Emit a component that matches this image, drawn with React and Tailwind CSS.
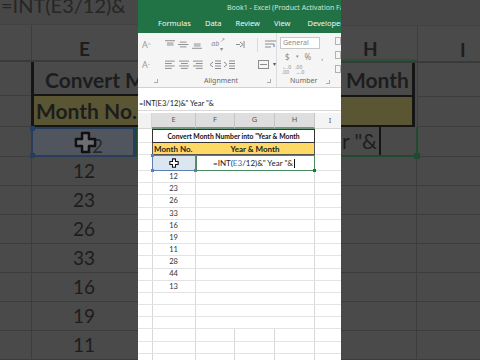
import React from "react";

const bgNums = ["12", "23", "26", "33", "16", "19", "11"];
const nums = ["12", "23", "26", "33", "16", "19", "11", "28", "44", "13", "", "", "", "", "", ""];

function Cross({ size, fill, stroke }) {
  return (
    <svg width={size} height={size} viewBox="0 0 12 12">
      <path
        d="M4.2 1h3.6v3.2H11v3.6H7.8V11H4.2V7.8H1V4.2h3.2z"
        fill={fill}
        stroke={stroke}
        strokeWidth="1.3"
        strokeLinejoin="round"
      />
    </svg>
  );
}

// tiny ribbon glyph made of strokes
function Glyph({ w = 11, h = 9, lines, color = "#8c8c8c" }) {
  return (
    <svg width={w} height={h} viewBox={`0 0 ${w} ${h}`}>
      {lines.map((l, i) => (
        <line key={i} x1={l[0]} y1={l[1]} x2={l[2]} y2={l[3]} stroke={l[4] || color} strokeWidth="1" />
      ))}
    </svg>
  );
}

const alTop = [[0, 0.5, 11, 0.5], [2, 3, 9, 3], [2, 5, 9, 5]];
const alMid = [[2, 2, 9, 2], [0, 4.5, 11, 4.5], [2, 7, 9, 7]];
const alBot = [[2, 4, 9, 4], [2, 6, 9, 6], [0, 8.5, 11, 8.5]];
const alLeft = [[0, 1, 10, 1], [0, 3.5, 7, 3.5], [0, 6, 10, 6], [0, 8.5, 7, 8.5]];
const alCenter = [[0, 1, 11, 1], [2, 3.5, 9, 3.5], [0, 6, 11, 6], [2, 8.5, 9, 8.5]];
const alRight = [[1, 1, 11, 1], [4, 3.5, 11, 3.5], [1, 6, 11, 6], [4, 8.5, 11, 8.5]];
const indL = [[0, 4.5, 3, 2], [0, 4.5, 3, 7], [5, 1, 11, 1], [5, 3.5, 11, 3.5], [5, 6, 11, 6], [5, 8.5, 11, 8.5]];
const indR = [[3, 4.5, 0, 2], [3, 4.5, 0, 7], [5, 1, 11, 1], [5, 3.5, 11, 3.5], [5, 6, 11, 6], [5, 8.5, 11, 8.5]];
const merge = [[0, 0.5, 11, 0.5], [0, 8.5, 11, 8.5], [0.5, 0, 0.5, 9], [10.5, 0, 10.5, 9], [2, 4.5, 9, 4.5]];
const wrap = [[0, 1, 11, 1], [0, 4, 9, 4], [9, 4, 9, 7, "#4a7bc0"], [0, 7, 6, 7]];

function LeftBg() {
  return (
    <div className="w-[138px] shrink-0 flex flex-col text-[#1d1d1d]">
      <div className="h-[26px] overflow-hidden bg-[#474747] border-b border-[#424242]">
        <div className="text-[20px] leading-[22px] -mt-[6px] pl-[1px] whitespace-nowrap text-[#262626]">
          {"=INT(E3/12)&"}
        </div>
      </div>
      <div className="h-[37px] flex border-b-2 border-[#3a3a3a]">
        <div className="w-[32px] border-r border-[#3d3d3d]" />
        <div className="flex-1 flex items-center justify-center pt-[14px] pr-[1px] text-[19px] font-bold">E</div>
      </div>
      <div className="h-[34px] flex">
        <div className="w-[31px] border-b border-[#3d3d3d]" />
        <div className="flex-1 border-l-[3px] border-b-2 border-[#151515] flex items-center pl-[11px] pt-[3px] text-[21px] font-bold whitespace-nowrap overflow-hidden">
          Convert Month
        </div>
      </div>
      <div className="h-[31px] flex">
        <div className="w-[31px] border-b border-[#3d3d3d]" />
        <div className="flex-1 bg-[#5a5634] border-l-[3px] border-b-2 border-[#151515] flex items-center pl-[2px] text-[21px] font-bold whitespace-nowrap overflow-hidden">
          Month No.
        </div>
      </div>
      <div className="h-[30px] flex">
        <div className="w-[31px] border-b border-[#3d3d3d]" />
        <div className="w-[104px] relative bg-[#51565e] border-2 border-[#263d5c] flex items-center justify-center text-[19px]">
          <span className="pl-[18px] pt-[8px] text-[#2a2a2a]">12</span>
          <div className="absolute left-[41px] top-[2px]">
            <Cross size={23} fill="#6d6f73" stroke="#111" />
          </div>
          <div className="absolute -left-[3px] -top-[3px] w-[5px] h-[5px] bg-[#263d5c]" />
          <div className="absolute -left-[3px] -bottom-[3px] w-[5px] h-[5px] bg-[#263d5c]" />
        </div>
        <div className="flex-1 border-l-2 border-[#1f4a30]" />
      </div>
      {bgNums.map((n, i) => (
        <div key={i} className="h-[29px] flex border-b border-[#3c3c3c] shrink-0">
          <div className="w-[32px] border-r border-[#3d3d3d]" />
          <div className="flex-1 flex items-center justify-center pr-[2px] text-[19px]">{n}</div>
        </div>
      ))}
    </div>
  );
}

function RightBg() {
  return (
    <div className="w-[139px] shrink-0 flex flex-col text-[#1d1d1d]">
      <div className="h-[26px] bg-[#474747] border-b border-[#424242]" />
      <div className="h-[37px] flex border-b-2 border-[#3a3a3a]">
        <div className="w-[76px] border-b-2 border-[#2a5238] flex items-center pl-[22px] pt-[14px] text-[19px] font-bold">
          H
        </div>
        <div className="flex-1 border-l border-[#3d3d3d] flex items-center pl-[42px] pt-[14px] text-[19px] font-bold">I</div>
      </div>
      <div className="h-[34px] flex">
        <div className="w-[74px] border-r-[3px] border-b-2 border-[#151515] flex items-center pl-[5px] pt-[3px] text-[21px] font-bold">
          Month
        </div>
        <div className="flex-1 ml-[2px] border-l border-b border-[#3d3d3d]" />
      </div>
      <div className="h-[31px] flex">
        <div className="w-[74px] bg-[#5a5634] border-r-[3px] border-b-2 border-[#151515]" />
        <div className="flex-1 ml-[2px] border-l border-b border-[#3d3d3d]" />
      </div>
      <div className="h-[30px] flex">
        <div className="w-[77px] relative border-r-2 border-b-2 border-[#1f4a30] flex items-center text-[21px]">
          <span className="pl-[1px] whitespace-nowrap">{'r "&'}</span>
          <div className="ml-[2px] w-[2px] h-[28px] bg-[#151515]" />
          <div className="absolute -right-[4px] -bottom-[4px] w-[6px] h-[6px] bg-[#1f4a30]" />
        </div>
        <div className="flex-1 border-b border-[#3d3d3d]" />
      </div>
      {bgNums.map((n, i) => (
        <div key={i} className="h-[29px] flex border-b border-[#3c3c3c] shrink-0">
          <div className="w-[76px] border-r border-[#3d3d3d]" />
        </div>
      ))}
    </div>
  );
}

function Ribbon() {
  return (
    <div className="h-[55px] bg-[#f5f5f5] border-b border-[#d2d2d2] flex text-[#7a7a7a] shrink-0">
      <div className="w-[22px] flex flex-col pl-[4px] pt-[7px]">
        <div className="text-[9px] leading-[10px] text-[#9a9a9a]">A<sup className="text-[5px]">^</sup></div>
        <div className="mt-[10px] text-[9px] leading-[10px] text-[#9a9a9a]">A<span className="text-[5px]">ˇ</span></div>
        <div className="mt-auto mb-[4px] ml-[12px] w-[4px] h-[4px] border-r border-b border-[#aaa]" />
      </div>
      <div className="w-[117px] border-r border-[#dcdcdc] flex flex-col">
        <div className="h-[21px] flex items-center gap-[3px] pl-[5px] pt-[2px]">
          <Glyph lines={alTop} />
          <Glyph lines={alMid} />
          <Glyph lines={alBot} />
          <div className="ml-[6px] flex items-center gap-[1px] text-[7px] text-[#8a8a8a] italic">
            ab<span className="not-italic text-[6px]">↗ ▾</span>
          </div>
          <div className="ml-[4px]">
            <Glyph w={10} lines={[[0, 4.5, 4, 4.5], [4, 2, 7, 4.5], [4, 7, 7, 4.5], [8, 1, 8, 8]]} />
          </div>
          <div className="ml-[8px] w-px h-[14px] bg-[#dadada]" />
          <div className="ml-[4px]">
            <Glyph lines={wrap} />
          </div>
        </div>
        <div className="h-[21px] flex items-center gap-[3px] pl-[5px]">
          <Glyph lines={alLeft} />
          <Glyph lines={alCenter} />
          <Glyph lines={alRight} />
          <div className="ml-[4px] flex gap-[3px]">
            <Glyph lines={indL} />
            <Glyph lines={indR} />
          </div>
          <div className="ml-[20px]">
            <Glyph w={12} lines={merge} />
          </div>
          <span className="text-[6px] text-[#555]">▾</span>
        </div>
        <div className="flex-1 flex items-center pl-[44px] text-[7px] text-[#6a6a6a]">
          Alignment
          <div className="ml-auto mr-[5px] w-[4px] h-[4px] border-r border-b border-[#aaa]" />
        </div>
      </div>
      <div className="w-[57px] flex flex-col">
        <div className="h-[16px] flex items-end pl-[3px]">
          <div className="w-[40px] h-[12px] bg-white border border-[#c8c8c8] flex items-center pl-[2px] text-[7px] text-[#8a8a8a]">
            General
          </div>
        </div>
        <div className="h-[15px] flex items-center pl-[8px] gap-[6px] text-[8px] text-[#8a8a8a]">
          <span>$</span>
          <span className="text-[5px]">▾</span>
          <span className="text-[8px]">%</span>
          <span className="ml-[4px] text-[8px]">,</span>
        </div>
        <div className="h-[12px] flex items-center pl-[5px] gap-[4px] text-[5px] leading-[5px] text-[#8a8a8a]">
          <span>←.0<br />.00</span>
          <span>.00<br />→.0</span>
        </div>
        <div className="flex-1 flex items-center pl-[13px] text-[7px] text-[#6a6a6a]">
          Number
          <div className="ml-auto mr-[4px] w-[4px] h-[4px] border-r border-b border-[#aaa]" />
        </div>
      </div>
      <div className="flex-1 flex flex-col gap-[6px] pt-[4px] pl-[1px]">
        <div className="w-[6px] h-[8px] border border-[#b0b0b0]" />
        <div className="w-[6px] h-[8px] border border-[#b0b0b0]" />
        <div className="w-[6px] h-[8px] border border-[#b0b0b0]" />
      </div>
    </div>
  );
}

function Panel() {
  return (
    <div className="w-[203px] shrink-0 flex flex-col bg-white font-['Noto_Sans',sans-serif] overflow-hidden">
      <div className="h-[33px] bg-[#217346] flex flex-col shrink-0">
        <div className="h-[17px] flex items-center pl-[89px] text-[7px] text-[#cfe3d5] whitespace-nowrap overflow-hidden">
          Book1 - Excel (Product Activation Failed)
        </div>
        <div className="flex-1 flex items-center gap-[14px] pl-[20px] pb-[2px] text-[7.5px] text-[#f2f7f3] whitespace-nowrap overflow-hidden">
          <span>Formulas</span>
          <span>Data</span>
          <span>Review</span>
          <span>View</span>
          <span className="ml-[3px]">Developer</span>
        </div>
      </div>
      <Ribbon />
      <div className="h-[10px] bg-white shrink-0" />
      <div className="h-[13px] flex items-center pl-[1px] border-b border-[#d8d8d8] text-[7.5px] text-[#222] font-['Lato',sans-serif] shrink-0">
        {'=INT(E3/12)&" Year "&'}
      </div>
      <div className="h-[2px] shrink-0" />
      <div className="h-[16px] flex text-[7.5px] text-[#555] shrink-0">
        <div className="w-[14px] bg-[#f2f2f2] border-r border-b border-[#d6d6d6]" />
        {[["E", 44], ["F", 39], ["G", 40], ["H", 40]].map(([c, w]) => (
          <div
            key={c}
            className="bg-[#dedede] border-r border-[#c6c6c6] border-b-2 border-b-[#6e9a7e] flex items-center justify-center"
            style={{ width: w }}
          >
            {c}
          </div>
        ))}
        <div className="flex-1 bg-[#f4f4f4] border-b border-[#d6d6d6] flex items-center justify-center pl-[4px]">I</div>
      </div>
      <div className="h-[14px] flex shrink-0 font-['Lato',sans-serif]">
        <div className="w-[14px] border-b border-[#e2e2e2]" />
        <div className="w-[163px] border border-[#333] flex items-center justify-center text-[6.8px] font-bold text-[#111] whitespace-nowrap">
          {'Convert Month Number into "Year & Month'}
        </div>
        <div className="flex-1 border-b border-[#e2e2e2]" />
      </div>
      <div className="h-[12px] flex shrink-0 font-['Lato',sans-serif] text-[8px] font-bold text-[#222]">
        <div className="w-[14px] border-b border-[#e2e2e2]" />
        <div className="w-[44px] bg-[#ffd966] border-l border-b border-[#555] flex items-center pl-[1px] whitespace-nowrap">
          Month No.
        </div>
        <div className="w-[119px] bg-[#ffd966] border-r border-b border-[#555] flex items-center justify-center">
          {"Year & Month"}
        </div>
        <div className="flex-1 border-b border-[#e2e2e2]" />
      </div>
      <div className="h-[16px] flex shrink-0 font-['Lato',sans-serif] text-[8px] text-[#222]">
        <div className="w-[14px] border-b border-[#e2e2e2]" />
        <div className="w-[44px] relative bg-[#dce6f1] border border-[#5b80b2] flex items-center justify-center">
          <Cross size={10} fill="#fff" stroke="#111" />
          <div className="absolute -left-[2px] -top-[2px] w-[3px] h-[3px] bg-[#5b80b2]" />
          <div className="absolute -left-[2px] -bottom-[2px] w-[3px] h-[3px] bg-[#5b80b2]" />
          <div className="absolute -right-[2px] -bottom-[2px] w-[3px] h-[3px] bg-[#5b80b2]" />
        </div>
        <div className="w-[119px] relative border-[1.5px] border-[#4c8a62] flex items-center pl-[16px] whitespace-nowrap">
          =INT(<span className="text-[#3d6fc4]">E3</span>
          {'/12)&" Year "&'}
          <span className="ml-px w-px h-[9px] bg-[#111]" />
          <div className="absolute -right-[2px] -bottom-[2px] w-[3px] h-[3px] bg-[#217346]" />
        </div>
        <div className="flex-1 border-b border-[#e2e2e2]" />
      </div>
      {nums.map((n, i) => (
        <div key={i} className="h-[12.2px] flex shrink-0 border-b border-[#e3e3e3] font-['Lato',sans-serif] text-[7.5px] text-[#333]">
          <div className="w-[14px]" />
          <div className="w-[44px] border-l border-r border-[#d9d9d9] flex items-center justify-center pr-[1px]">{n}</div>
          {i >= 13 ? (
            <>
              <div className="w-[39px] border-r border-[#d9d9d9]" />
              <div className="w-[40px] border-r border-[#d9d9d9]" />
              <div className="w-[40px] border-r border-[#d9d9d9]" />
            </>
          ) : (
            <div className="w-[119px] border-r border-[#d9d9d9]" />
          )}
          <div className="flex-1" />
        </div>
      ))}
    </div>
  );
}

export default function App() {
  return (
    <div className="flex w-[480px] h-[360px] overflow-hidden bg-[#4a4a4a] font-['Lato',sans-serif]">
      <LeftBg />
      <Panel />
      <RightBg />
    </div>
  );
}
